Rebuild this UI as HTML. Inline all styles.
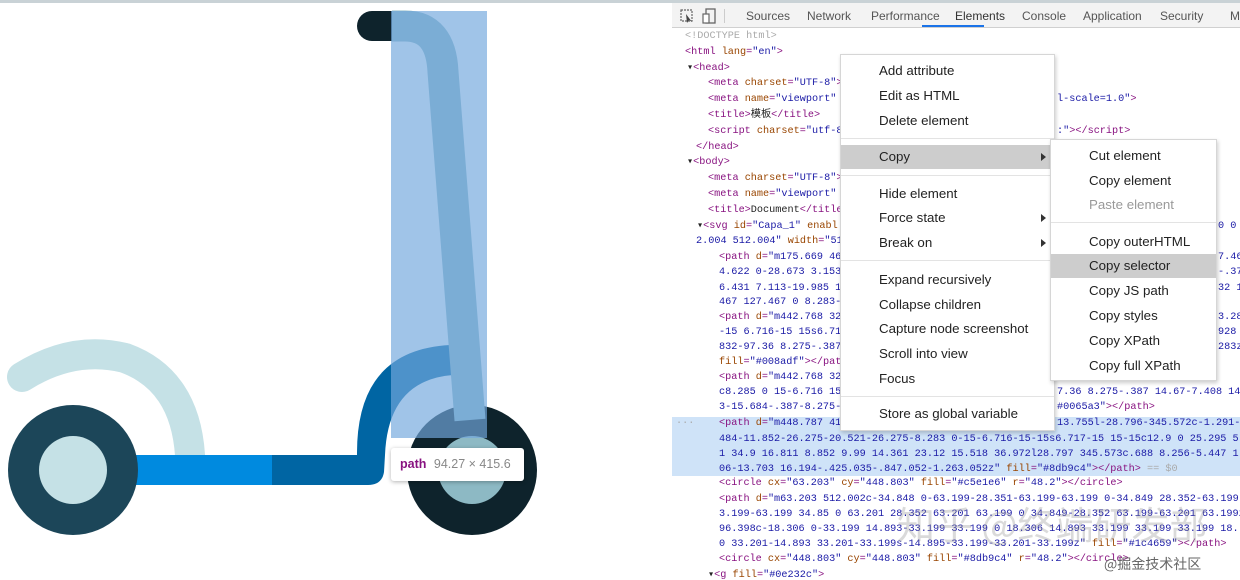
<!DOCTYPE html>
<html><head><meta charset="utf-8">
<style>
*{margin:0;padding:0;box-sizing:border-box}
body{width:1240px;height:580px;overflow:hidden;background:#fff;position:relative;font-family:"Liberation Sans","Noto Sans CJK SC",sans-serif}
#topline{position:absolute;left:0;top:0;width:1240px;height:3px;background:#c9d2d6}
#dev{position:absolute;left:672px;top:3px;width:568px;height:577px;background:#fff;overflow:hidden}
#tabs{position:absolute;left:0;top:0;width:568px;height:25px;background:#f3f3f3;border-bottom:1px solid #d0d0d0}
.tab{position:absolute;top:6px;font-size:12px;color:#555}
.ln{position:absolute;white-space:pre;font-family:"Liberation Mono","Noto Sans CJK SC",monospace;font-size:10.2px;line-height:14px;color:#1a1aa6}
.t{color:#881280}.a{color:#994500}.v{color:#1a1aa6}.g{color:#aaa}.k{color:#222}
#sel{position:absolute;left:0;top:414px;width:568px;height:59px;background:#cfe3f8}
.menu{position:absolute;background:#fff;border:1px solid #d6d6d6;box-shadow:1px 2px 4px rgba(0,0,0,.2)}
.mi{position:absolute;font-size:13.3px;color:#222;white-space:nowrap}
.sep{position:absolute;height:1px;background:#e3e3e3}
.hl{position:absolute;background:#cdcdcd}
.arr{position:absolute;width:0;height:0;border-left:5px solid #333;border-top:4px solid transparent;border-bottom:4px solid transparent}
</style></head><body>
<div id="topline"></div>
<svg width="672" height="580" style="position:absolute;left:0;top:0">
 <path d="M22 377 Q73 345 125 358 Q185 380 190 455" fill="none" stroke="#c5e1e6" stroke-width="30" stroke-linecap="round"/>
 <rect x="130" y="455" width="145" height="30" fill="#008adf"/>
 <path d="M272 455 H357 Q356 350 450 345 L453 375 Q388 380 385 455 L384 472 Q382 485 368 485 H272 Z" fill="#0065a3"/>
 <ellipse cx="73" cy="470" rx="65" ry="65" fill="#1c4659"/>
 <ellipse cx="73" cy="470" rx="34" ry="34" fill="#c5e1e6"/>
 <ellipse cx="472" cy="470" rx="65" ry="65" fill="#0e232c"/>
 <ellipse cx="472" cy="470" rx="34" ry="34" fill="#8db9c4"/>
 <path d="M372 26 H405" stroke="#0e232c" stroke-width="30" stroke-linecap="round"/>
 <path d="M392 26 H405 Q441 26 443 72 L470 420" fill="none" stroke="#8db9c4" stroke-width="31"/>
 <rect x="391" y="11" width="96" height="427" fill="rgba(114,167,221,0.675)"/>
</svg>
<div style="position:absolute;left:391px;top:448px;width:133px;height:33px;background:#fff;border-radius:3px;box-shadow:0 1px 4px rgba(0,0,0,.3);font-size:12.5px;line-height:33px;padding-left:9px"><b style="color:#881280">path</b> <span style="color:#888;margin-left:4px">94.27 × 415.6</span></div>

<div id="dev">
 <div id="tabs">
  <svg width="50" height="22" style="position:absolute;left:6px;top:2px"><rect x="3" y="5" width="11" height="11" fill="none" stroke="#666" stroke-width="1.2" stroke-dasharray="2 1"/><path d="M8 9 L14 17 L11 15 L9 18Z" fill="#444"/><rect x="28" y="4" width="9" height="14" fill="none" stroke="#666" stroke-width="1.3"/><rect x="25" y="9" width="6" height="9" fill="#fff" stroke="#666" stroke-width="1.2"/><rect x="46" y="4" width="1" height="14" fill="#ccc"/></svg>
  <span class="tab" style="left:74px">Sources</span>
  <span class="tab" style="left:135px">Network</span>
  <span class="tab" style="left:199px">Performance</span>
  <span class="tab" style="left:283px;color:#333">Elements</span>
  <div style="position:absolute;left:250px;top:22px;width:62px;height:2px;background:#1a73e8"></div>
  <span class="tab" style="left:350px">Console</span>
  <span class="tab" style="left:411px">Application</span>
  <span class="tab" style="left:488px">Security</span>
  <span class="tab" style="left:558px">M</span>
 </div>
 <div id="sel"></div>
 <div class="ln g" style="left:4px;top:414px">···</div>
 <div class="ln g" style="left:13px;top:27px">&lt;!DOCTYPE html&gt;</div>
 <div class="ln" style="left:13px;top:43px"><span class="t">&lt;html </span><span class="a">lang</span><span class="t">=</span>"en"<span class="t">&gt;</span></div>
 <div class="ln" style="left:15px;top:59px"><span class="k">▾</span><span class="t">&lt;head&gt;</span></div>
 <div class="ln" style="left:36px;top:74px"><span class="t">&lt;meta </span><span class="a">charset</span><span class="t">=</span>"UTF-8"<span class="t">&gt;</span></div>
 <div class="ln" style="left:36px;top:90px"><span class="t">&lt;meta </span><span class="a">name</span><span class="t">=</span>"viewport"</div>
 <div class="ln" style="left:385px;top:90px">l-scale=1.0"<span class="t">&gt;</span></div>
 <div class="ln" style="left:36px;top:106px"><span class="t">&lt;title&gt;</span><span class="k">模板</span><span class="t">&lt;/title&gt;</span></div>
 <div class="ln" style="left:36px;top:122px"><span class="t">&lt;script </span><span class="a">charset</span><span class="t">=</span>"utf-8</div>
 <div class="ln" style="left:385px;top:122px">:"<span class="t">&gt;&lt;/script&gt;</span></div>
 <div class="ln" style="left:24px;top:138px"><span class="t">&lt;/head&gt;</span></div>
 <div class="ln" style="left:15px;top:153px"><span class="k">▾</span><span class="t">&lt;body&gt;</span></div>
 <div class="ln" style="left:36px;top:169px"><span class="t">&lt;meta </span><span class="a">charset</span><span class="t">=</span>"UTF-8"<span class="t">&gt;</span></div>
 <div class="ln" style="left:36px;top:185px"><span class="t">&lt;meta </span><span class="a">name</span><span class="t">=</span>"viewport"</div>
 <div class="ln" style="left:36px;top:201px"><span class="t">&lt;title&gt;</span><span class="k">Document</span><span class="t">&lt;/title</span></div>
 <div class="ln" style="left:25px;top:217px"><span class="k">▾</span><span class="t">&lt;svg </span><span class="a">id</span><span class="t">=</span>"Capa_1" <span class="a">enabl</span></div>
 <div class="ln" style="left:546px;top:217px">0 0</div>
 <div class="ln" style="left:24px;top:232px">2.004 512.004" <span class="a">width</span><span class="t">=</span>"51</div>
 <div class="ln" style="left:47px;top:248px"><span class="t">&lt;path </span><span class="a">d</span><span class="t">=</span>"m175.669 46</div>
 <div class="ln" style="left:546px;top:248px">7.46</div>
 <div class="ln" style="left:47px;top:263px">4.622 0-28.673 3.153</div>
 <div class="ln" style="left:546px;top:263px">-.37</div>
 <div class="ln" style="left:47px;top:279px">6.431 7.113-19.985 1</div>
 <div class="ln" style="left:546px;top:279px">32 1</div>
 <div class="ln" style="left:47px;top:293px">467 127.467 0 8.283-</div>
 <div class="ln" style="left:47px;top:308px"><span class="t">&lt;path </span><span class="a">d</span><span class="t">=</span>"m442.768 32</div>
 <div class="ln" style="left:546px;top:308px">3.28</div>
 <div class="ln" style="left:47px;top:323px">-15 6.716-15 15s6.71</div>
 <div class="ln" style="left:546px;top:323px">928</div>
 <div class="ln" style="left:47px;top:338px">832-97.36 8.275-.387</div>
 <div class="ln" style="left:546px;top:338px">283z</div>
 <div class="ln" style="left:47px;top:353px"><span class="a">fill</span><span class="t">=</span>"#008adf"<span class="t">&gt;&lt;/pat</span></div>
 <div class="ln" style="left:47px;top:368px"><span class="t">&lt;path </span><span class="a">d</span><span class="t">=</span>"m442.768 32</div>
 <div class="ln" style="left:385px;top:368px">_____________________h80.</div>
 <div class="ln" style="left:47px;top:383px">c8.285 0 15-6.716 15</div>
 <div class="ln" style="left:385px;top:383px">7.36 8.275-.387 14.67-7.408 14</div>
 <div class="ln" style="left:47px;top:398px">3-15.684-.387-8.275-</div>
 <div class="ln" style="left:385px;top:398px">#0065a3"<span class="t">&gt;&lt;/path&gt;</span></div>
 <div class="ln" style="left:47px;top:414px"><span class="t">&lt;path </span><span class="a">d</span><span class="t">=</span>"m448.787 41</div>
 <div class="ln" style="left:385px;top:414px">13.755l-28.796-345.572c-1.291-</div>
 <div class="ln" style="left:47px;top:430px">484-11.852-26.275-20.521-26.275-8.283 0-15-6.716-15-15s6.717-15 15-15c12.9 0 25.295 5</div>
 <div class="ln" style="left:47px;top:445px">1 34.9 16.811 8.852 9.99 14.361 23.12 15.518 36.972l28.797 345.573c.688 8.256-5.447 1</div>
 <div class="ln" style="left:47px;top:460px">06-13.703 16.194-.425.035-.847.052-1.263.052z" <span class="a">fill</span><span class="t">=</span>"#8db9c4"<span class="t">&gt;&lt;/path&gt;</span> <span class="g">== $0</span></div>
 <div class="ln" style="left:47px;top:474px"><span class="t">&lt;circle </span><span class="a">cx</span><span class="t">=</span>"63.203" <span class="a">cy</span><span class="t">=</span>"448.803" <span class="a">fill</span><span class="t">=</span>"#c5e1e6" <span class="a">r</span><span class="t">=</span>"48.2"<span class="t">&gt;&lt;/circle&gt;</span></div>
 <div class="ln" style="left:47px;top:490px"><span class="t">&lt;path </span><span class="a">d</span><span class="t">=</span>"m63.203 512.002c-34.848 0-63.199-28.351-63.199-63.199 0-34.849 28.352-63.199</div>
 <div class="ln" style="left:47px;top:505px">3.199-63.199 34.85 0 63.201 28.352 63.201 63.199 0 34.849-28.352 63.199-63.201 63.199z</div>
 <div class="ln" style="left:47px;top:520px">96.398c-18.306 0-33.199 14.893-33.199 33.199 0 18.306 14.893 33.199 33.199 33.199 18.</div>
 <div class="ln" style="left:47px;top:535px">0 33.201-14.893 33.201-33.199s-14.895-33.199-33.201-33.199z" <span class="a">fill</span><span class="t">=</span>"#1c4659"<span class="t">&gt;&lt;/path&gt;</span></div>
 <div class="ln" style="left:47px;top:550px"><span class="t">&lt;circle </span><span class="a">cx</span><span class="t">=</span>"448.803" <span class="a">cy</span><span class="t">=</span>"448.803" <span class="a">fill</span><span class="t">=</span>"#8db9c4" <span class="a">r</span><span class="t">=</span>"48.2"<span class="t">&gt;&lt;/circle&gt;</span></div>
 <div class="ln" style="left:36px;top:566px"><span class="k">▾</span><span class="t">&lt;g </span><span class="a">fill</span><span class="t">=</span>"#0e232c"<span class="t">&gt;</span></div>
 <div style="position:absolute;left:225px;top:492px;font-size:38px;color:rgba(150,150,150,.35);font-family:'Noto Sans CJK SC',sans-serif;white-space:nowrap">知乎 @终端研发部</div>
 <div style="position:absolute;left:432px;top:551px;font-size:14px;color:#666;font-family:'Noto Sans CJK SC',sans-serif;white-space:nowrap">@掘金技术社区</div>
</div>

<div class="menu" style="left:840px;top:54px;width:215px;height:377px">
 <div class="mi" style="left:38px;top:8px">Add attribute</div>
 <div class="mi" style="left:38px;top:33px">Edit as HTML</div>
 <div class="mi" style="left:38px;top:58px">Delete element</div>
 <div class="sep" style="left:0;top:83px;width:213px"></div>
 <div class="hl" style="left:0;top:90px;width:213px;height:24px"></div>
 <div class="mi" style="left:38px;top:94px">Copy</div>
 <div class="arr" style="left:200px;top:98px"></div>
 <div class="sep" style="left:0;top:120px;width:213px"></div>
 <div class="mi" style="left:38px;top:131px">Hide element</div>
 <div class="mi" style="left:38px;top:155px">Force state</div>
 <div class="arr" style="left:200px;top:159px"></div>
 <div class="mi" style="left:38px;top:180px">Break on</div>
 <div class="arr" style="left:200px;top:184px"></div>
 <div class="sep" style="left:0;top:205px;width:213px"></div>
 <div class="mi" style="left:38px;top:217px">Expand recursively</div>
 <div class="mi" style="left:38px;top:242px">Collapse children</div>
 <div class="mi" style="left:38px;top:266px">Capture node screenshot</div>
 <div class="mi" style="left:38px;top:291px">Scroll into view</div>
 <div class="mi" style="left:38px;top:316px">Focus</div>
 <div class="sep" style="left:0;top:341px;width:213px"></div>
 <div class="mi" style="left:38px;top:351px">Store as global variable</div>
</div>
<div class="menu" style="left:1050px;top:139px;width:167px;height:242px">
 <div class="mi" style="left:38px;top:8px">Cut element</div>
 <div class="mi" style="left:38px;top:33px">Copy element</div>
 <div class="mi" style="left:38px;top:57px;color:#999">Paste element</div>
 <div class="sep" style="left:0;top:82px;width:165px"></div>
 <div class="mi" style="left:38px;top:94px">Copy outerHTML</div>
 <div class="hl" style="left:0;top:114px;width:165px;height:24px"></div>
 <div class="mi" style="left:38px;top:118px">Copy selector</div>
 <div class="mi" style="left:38px;top:143px">Copy JS path</div>
 <div class="mi" style="left:38px;top:168px">Copy styles</div>
 <div class="mi" style="left:38px;top:193px">Copy XPath</div>
 <div class="mi" style="left:38px;top:218px">Copy full XPath</div>
</div>
</body></html>
